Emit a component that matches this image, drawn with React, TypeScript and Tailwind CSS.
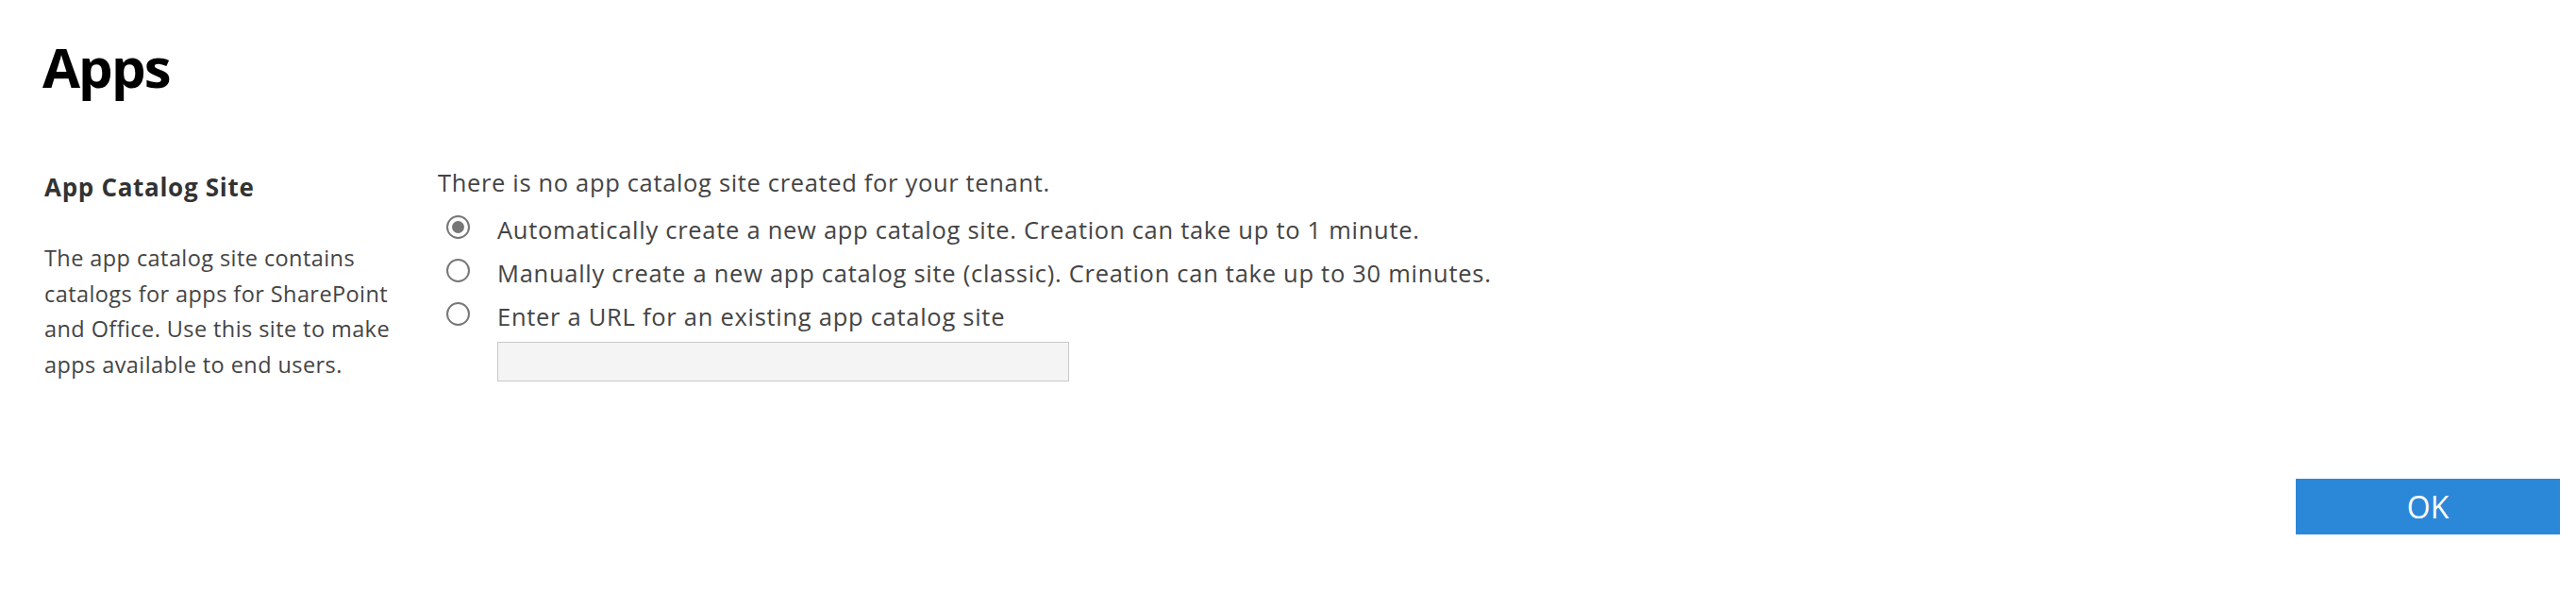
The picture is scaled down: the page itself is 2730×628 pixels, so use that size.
import React from 'react';

const options = [
  { label: 'Automatically create a new app catalog site. Creation can take up to 1 minute.', checked: true },
  { label: 'Manually create a new app catalog site (classic). Creation can take up to 30 minutes.', checked: false },
  { label: 'Enter a URL for an existing app catalog site', checked: false },
];

function Radio({ checked }: { checked: boolean }) {
  return (
    <div className="mt-[8px] ml-[9px] flex h-[25px] w-[25px] shrink-0 items-center justify-center rounded-full border-2 border-[#777]">
      {checked && <div className="h-[13px] w-[13px] rounded-full bg-[#777]" />}
    </div>
  );
}

export default function App() {
  return (
    <div className="relative h-[628px] w-[2730px] overflow-hidden bg-white font-['Open_Sans',sans-serif]">
      <h1 className="pl-[45px] pt-[42px] text-[58px] font-bold leading-[58px] tracking-[-1.9px] text-black">Apps</h1>

      <div className="mt-[75px] flex">
        {/* left: section description */}
        <div className="w-[418px] shrink-0 pl-[47px] pt-[5px]">
          <h2 className="text-[26px] font-bold leading-[36px] tracking-[0.7px] text-[#333]">App Catalog Site</h2>
          <p className="mt-[39px] w-[380px] text-[23.5px] leading-[37.7px] tracking-[0.42px] text-[#444]">
            The app catalog site contains catalogs for apps for SharePoint and Office. Use this site to make apps available to end users.
          </p>
        </div>

        {/* right: choices */}
        <div className="flex-1 pl-[46px]">
          <p className="text-[25.5px] leading-[36px] tracking-[0.66px] text-[#444]">There is no app catalog site created for your tenant.</p>
          <div className="mt-[8.6px] flex flex-col">
            {options.map((o) => (
              <label key={o.label} className="flex h-[46px] items-start">
                <Radio checked={o.checked} />
                <span className="ml-[29px] text-[25.5px] leading-[46px] tracking-[0.72px] text-[#444]">{o.label}</span>
              </label>
            ))}
          </div>
          <div className="ml-[63px] mt-[4px] h-[42px] w-[606px] border border-[#c8c8c8] bg-[#f4f4f4]" />
        </div>
      </div>

      <div className="mt-[101px] flex justify-end pr-[17px]">
        <button className="h-[59px] w-[280px] bg-[#2b88d8] text-[32px] leading-[59px] text-white">OK</button>
      </div>
    </div>
  );
}
